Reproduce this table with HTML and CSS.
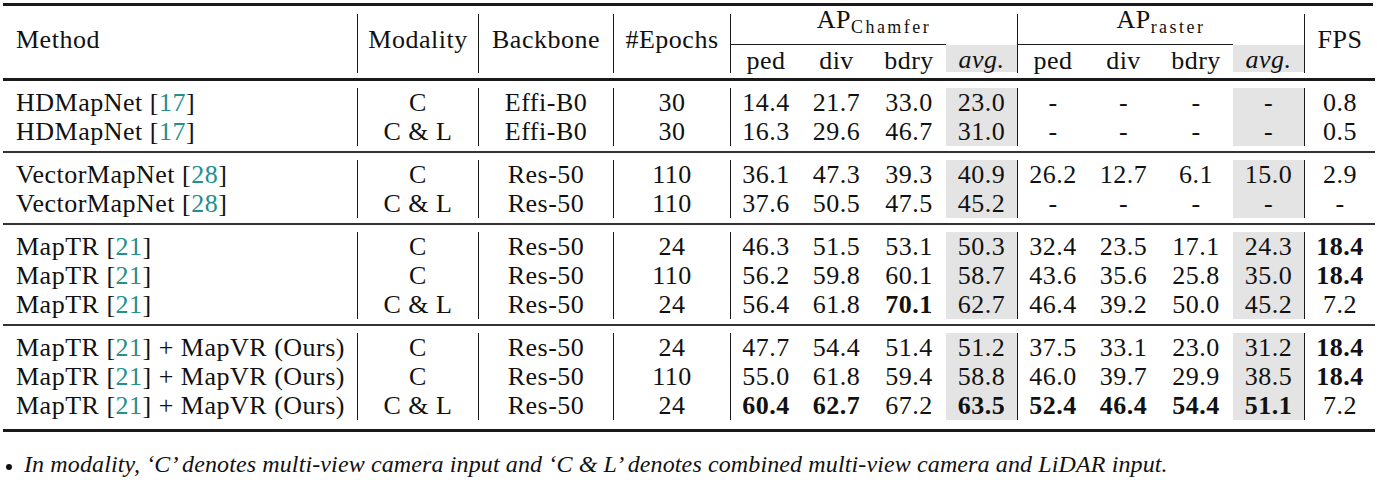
FILE: index.html
```html
<!DOCTYPE html>
<html lang="en">
<head>
  <meta charset="UTF-8" />
  <title>Comparison with state-of-the-art methods</title>
  <link rel="stylesheet" href="styles.css">
</head>
<body>

  <div class="sheet">
    <div class="toprule"></div>

    <table class="results">
      <colgroup>
        <col class="w-method"><col class="w-mod"><col class="w-bb"><col class="w-ep">
        <col class="w-n"><col class="w-n"><col class="w-n2"><col class="w-n">
        <col class="w-n"><col class="w-n"><col class="w-n2"><col class="w-n">
        <col class="w-n">
      </colgroup>

      <thead>
        <tr class="gap top"><td colspan="13"></td></tr>
        <tr class="h1">
          <th rowspan="2" class="span method">Method</th>
          <th rowspan="2" class="span vl">Modality</th>
          <th rowspan="2" class="span vl">Backbone</th>
          <th rowspan="2" class="span vl">#Epochs</th>
          <th colspan="4" class="vl group">AP<sub>Chamfer</sub></th>
          <th colspan="4" class="vl group">AP<sub>raster</sub></th>
          <th rowspan="2" class="span vl">FPS</th>
        </tr>
        <tr class="h2">
          <th class="vl cm">ped</th><th class="cm">div</th><th class="cm">bdry</th><th class="avg"><i>avg.</i></th>
          <th class="vl cm">ped</th><th class="cm">div</th><th class="cm">bdry</th><th class="avg"><i>avg.</i></th>
        </tr>
        <tr class="gap head-end"><td colspan="13"></td></tr>
      </thead>

      <tbody>
        <tr class="gap thick"><td colspan="13"></td></tr>
        <tr>
          <td class="method">HDMapNet [<span class="cite">17</span>]</td>
          <td class="vl">C</td><td class="vl">Effi-B0</td><td class="vl">30</td>
          <td class="vl">14.4</td><td>21.7</td><td>33.0</td><td class="avg">23.0</td>
          <td class="vl">-</td><td>-</td><td>-</td><td class="avg">-</td>
          <td class="vl">0.8</td>
        </tr>
        <tr>
          <td class="method">HDMapNet [<span class="cite">17</span>]</td>
          <td class="vl">C &amp; L</td><td class="vl">Effi-B0</td><td class="vl">30</td>
          <td class="vl">16.3</td><td>29.6</td><td>46.7</td><td class="avg">31.0</td>
          <td class="vl">-</td><td>-</td><td>-</td><td class="avg">-</td>
          <td class="vl">0.5</td>
        </tr>
        <tr class="gap end"><td colspan="13"></td></tr>
      </tbody>

      <tbody>
        <tr class="gap rule"><td colspan="13"></td></tr>
        <tr>
          <td class="method">VectorMapNet [<span class="cite">28</span>]</td>
          <td class="vl">C</td><td class="vl">Res-50</td><td class="vl">110</td>
          <td class="vl">36.1</td><td>47.3</td><td>39.3</td><td class="avg">40.9</td>
          <td class="vl">26.2</td><td>12.7</td><td>6.1</td><td class="avg">15.0</td>
          <td class="vl">2.9</td>
        </tr>
        <tr>
          <td class="method">VectorMapNet [<span class="cite">28</span>]</td>
          <td class="vl">C &amp; L</td><td class="vl">Res-50</td><td class="vl">110</td>
          <td class="vl">37.6</td><td>50.5</td><td>47.5</td><td class="avg">45.2</td>
          <td class="vl">-</td><td>-</td><td>-</td><td class="avg">-</td>
          <td class="vl">-</td>
        </tr>
        <tr class="gap end"><td colspan="13"></td></tr>
      </tbody>

      <tbody>
        <tr class="gap rule"><td colspan="13"></td></tr>
        <tr>
          <td class="method">MapTR [<span class="cite">21</span>]</td>
          <td class="vl">C</td><td class="vl">Res-50</td><td class="vl">24</td>
          <td class="vl">46.3</td><td>51.5</td><td>53.1</td><td class="avg">50.3</td>
          <td class="vl">32.4</td><td>23.5</td><td>17.1</td><td class="avg">24.3</td>
          <td class="vl"><b>18.4</b></td>
        </tr>
        <tr>
          <td class="method">MapTR [<span class="cite">21</span>]</td>
          <td class="vl">C</td><td class="vl">Res-50</td><td class="vl">110</td>
          <td class="vl">56.2</td><td>59.8</td><td>60.1</td><td class="avg">58.7</td>
          <td class="vl">43.6</td><td>35.6</td><td>25.8</td><td class="avg">35.0</td>
          <td class="vl"><b>18.4</b></td>
        </tr>
        <tr>
          <td class="method">MapTR [<span class="cite">21</span>]</td>
          <td class="vl">C &amp; L</td><td class="vl">Res-50</td><td class="vl">24</td>
          <td class="vl">56.4</td><td>61.8</td><td><b>70.1</b></td><td class="avg">62.7</td>
          <td class="vl">46.4</td><td>39.2</td><td>50.0</td><td class="avg">45.2</td>
          <td class="vl">7.2</td>
        </tr>
        <tr class="gap end"><td colspan="13"></td></tr>
      </tbody>

      <tbody>
        <tr class="gap rule"><td colspan="13"></td></tr>
        <tr>
          <td class="method">MapTR [<span class="cite">21</span>] + MapVR (Ours)</td>
          <td class="vl">C</td><td class="vl">Res-50</td><td class="vl">24</td>
          <td class="vl">47.7</td><td>54.4</td><td>51.4</td><td class="avg">51.2</td>
          <td class="vl">37.5</td><td>33.1</td><td>23.0</td><td class="avg">31.2</td>
          <td class="vl"><b>18.4</b></td>
        </tr>
        <tr>
          <td class="method">MapTR [<span class="cite">21</span>] + MapVR (Ours)</td>
          <td class="vl">C</td><td class="vl">Res-50</td><td class="vl">110</td>
          <td class="vl">55.0</td><td>61.8</td><td>59.4</td><td class="avg">58.8</td>
          <td class="vl">46.0</td><td>39.7</td><td>29.9</td><td class="avg">38.5</td>
          <td class="vl"><b>18.4</b></td>
        </tr>
        <tr>
          <td class="method">MapTR [<span class="cite">21</span>] + MapVR (Ours)</td>
          <td class="vl">C &amp; L</td><td class="vl">Res-50</td><td class="vl">24</td>
          <td class="vl"><b>60.4</b></td><td><b>62.7</b></td><td>67.2</td><td class="avg"><b>63.5</b></td>
          <td class="vl"><b>52.4</b></td><td><b>46.4</b></td><td><b>54.4</b></td><td class="avg"><b>51.1</b></td>
          <td class="vl">7.2</td>
        </tr>
        <tr class="gap last"><td colspan="13"></td></tr>
      </tbody>
    </table>

    <p class="note">
      <span class="bullet"></span><i>In modality, ‘C’ denotes multi-view camera input and ‘C &amp; L’ denotes combined multi-view camera and LiDAR input.</i>
    </p>
  </div>

</body>
</html>
```

FILE: styles.css
```css
:root {
  --ink: #111;
  --rule: #1a1a1a;
  --shade: #e4e4e4;
  --cite: #23908c;
  --font-main: 'Liberation Serif', 'DejaVu Serif', serif;
}

html,
body {
  margin: 0;
  background: #fff;
}

body {
  color: var(--ink);
  font-family: var(--font-main);
}

.sheet {
  padding: 3px 4px 0 3px;
}

.toprule {
  width: 1370px;
  height: 3px;
  background: var(--rule);
}

/* table */

.results {
  width: 1370px;
  table-layout: fixed;
  border-collapse: separate;
  border-spacing: 0;
  font-size: 26px;
  line-height: 29px;
  letter-spacing: 0.5px;
}

.w-method { width: 354px; }
.w-mod    { width: 121px; }
.w-bb     { width: 135px; }
.w-ep     { width: 117px; }
.w-n      { width: 71px; }
.w-n2     { width: 74px; }

.results th,
.results td {
  padding: 0;
  text-align: center;
  font-weight: normal;
  white-space: nowrap;
}

.results .method {
  text-align: left;
  padding-left: 13px;
}

.results .vl {
  border-left: 1px solid var(--rule);
}

.results .avg {
  background: var(--shade);
}

.cite {
  color: var(--cite);
}

/* header */

.h1 {
  height: 30px;
}

.h1 .span {
  vertical-align: top;
  padding-top: 11px;
}

.h1 .group {
  vertical-align: top;
  line-height: 12px;
}

.h2 {
  height: 29px;
}

.h2 th {
  vertical-align: top;
  line-height: 24px;
  padding-top: 4px;
}

.h2 .cm {
  border-top: 1px solid var(--rule);
}

.h2 .avg {
  background: linear-gradient(var(--shade), var(--shade)) 0 1px / 100% 27px no-repeat;
}

sub {
  font-size: 18px;
  letter-spacing: 2.5px;
  line-height: 0;
  vertical-align: -5px;
}

/* spacing rows and rules between groups */

.results .gap td {
  padding: 0;
}

.gap.top      { height: 8px; }
.gap.head-end { height: 5px; }
.gap.end      { height: 5px; }
.gap.last     { height: 12px; }

.gap.thick { height: 10px; }
.gap.thick td { border-top: 3px solid var(--rule); }

.gap.rule { height: 9px; }
.gap.rule td { border-top: 2px solid #333; }

.gap.last td { border-bottom: 3px solid var(--rule); }

/* footnote */

.note {
  margin: 18px 0 0 1px;
  font-size: 24px;
  line-height: 28px;
  letter-spacing: 0.12px;
}

.bullet {
  display: inline-block;
  width: 6px;
  height: 6px;
  margin: 0 12px 0 2px;
  border-radius: 50%;
  background: var(--ink);
  vertical-align: 2px;
}
```
